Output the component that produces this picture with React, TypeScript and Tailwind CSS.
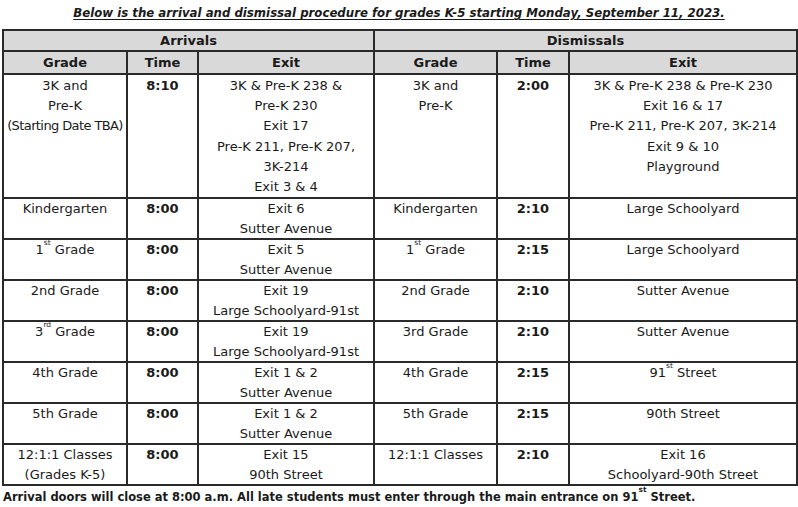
const font = { fontFamily: '"DejaVu Sans", "Open Sans", sans-serif' }

type Row = {
  grade: React.ReactNode
  time: string
  exit: React.ReactNode
  dGrade: React.ReactNode
  dTime: string
  dExit: React.ReactNode
  h: string
}

const Sup = ({ children }: { children: React.ReactNode }) => (
  <sup className="text-[7.5px] align-[5px] leading-none">{children}</sup>
)

const lines = (...items: React.ReactNode[]) =>
  items.map((item, i) => <div key={i}>{item}</div>)

const rows: Row[] = [
  {
    grade: [
      <div key="a">3K and</div>,
      <div key="b">Pre-K</div>,
      <div key="c" className="whitespace-nowrap tracking-[-0.6px] -mx-[3px]">(Starting Date TBA)</div>,
    ],
    time: '8:10',
    exit: lines('3K & Pre-K 238 &', 'Pre-K 230', 'Exit 17', 'Pre-K 211, Pre-K 207,', '3K-214', 'Exit 3 & 4'),
    dGrade: lines('3K and', 'Pre-K'),
    dTime: '2:00',
    dExit: lines('3K & Pre-K 238 &  Pre-K 230', 'Exit 16 & 17', 'Pre-K 211, Pre-K 207, 3K-214', 'Exit 9 & 10', 'Playground'),
    h: 'h-[123px]',
  },
  {
    grade: 'Kindergarten',
    time: '8:00',
    exit: lines('Exit 6', 'Sutter Avenue'),
    dGrade: 'Kindergarten',
    dTime: '2:10',
    dExit: 'Large Schoolyard',
    h: 'h-[41px]',
  },
  {
    grade: <>1<Sup>st</Sup> Grade</>,
    time: '8:00',
    exit: lines('Exit 5', 'Sutter Avenue'),
    dGrade: <>1<Sup>st</Sup> Grade</>,
    dTime: '2:15',
    dExit: 'Large Schoolyard',
    h: 'h-[41px]',
  },
  {
    grade: '2nd Grade',
    time: '8:00',
    exit: lines('Exit 19', 'Large Schoolyard-91st'),
    dGrade: '2nd Grade',
    dTime: '2:10',
    dExit: 'Sutter Avenue',
    h: 'h-[41px]',
  },
  {
    grade: <>3<Sup>rd</Sup> Grade</>,
    time: '8:00',
    exit: lines('Exit 19', 'Large Schoolyard-91st'),
    dGrade: '3rd Grade',
    dTime: '2:10',
    dExit: 'Sutter Avenue',
    h: 'h-[41px]',
  },
  {
    grade: '4th Grade',
    time: '8:00',
    exit: lines('Exit 1 & 2', 'Sutter Avenue'),
    dGrade: '4th Grade',
    dTime: '2:15',
    dExit: <>91<Sup>st</Sup> Street</>,
    h: 'h-[40px]',
  },
  {
    grade: '5th Grade',
    time: '8:00',
    exit: lines('Exit 1 & 2', 'Sutter Avenue'),
    dGrade: '5th Grade',
    dTime: '2:15',
    dExit: '90th Street',
    h: 'h-[41px]',
  },
  {
    grade: lines('12:1:1 Classes', '(Grades K-5)'),
    time: '8:00',
    exit: lines('Exit 15', '90th Street'),
    dGrade: '12:1:1 Classes',
    dTime: '2:10',
    dExit: lines('Exit 16', 'Schoolyard-90th Street'),
    h: 'h-[41px]',
  },
]

const cell = 'border-2 border-[#2a2a2a] align-top text-center p-0'

export default function App() {
  return (
    <div className="w-[798px] h-[507px] bg-white text-[#1a1a1a] overflow-hidden" style={font}>
      <div className="h-[29px] text-center">
        <span className="text-[11.75px] leading-[16px] font-bold italic underline underline-offset-2">
          Below is the arrival and dismissal procedure for grades K-5 starting Monday, September 11, 2023.
        </span>
      </div>
      <table className="ml-[2px] w-[794px] border-collapse table-fixed text-[13px] leading-[19.5px]">
        <colgroup>
          <col className="w-[124px]" />
          <col className="w-[71px]" />
          <col className="w-[176px]" />
          <col className="w-[123px]" />
          <col className="w-[72px]" />
          <col className="w-[228px]" />
        </colgroup>
        <thead>
          <tr className="h-[21px] bg-[#d9d9d9] font-bold">
            <th colSpan={3} className="border-2 border-[#2a2a2a] p-0 text-center align-middle leading-[17px]">Arrivals</th>
            <th colSpan={3} className="border-2 border-[#2a2a2a] p-0 text-center align-middle leading-[17px]">Dismissals</th>
          </tr>
          <tr className="h-[23px] bg-[#d9d9d9] font-bold text-[13px]">
            {['Grade', 'Time', 'Exit', 'Grade', 'Time', 'Exit'].map((t, i) => (
              <th key={i} className="border-2 border-[#2a2a2a] p-0 text-center align-middle leading-[19px]">{t}</th>
            ))}
          </tr>
        </thead>
        <tbody>
          {rows.map((r, i) => {
            const first = i === 0 ? 'pt-[1px] leading-[20.2px]' : ''
            return (
              <tr key={i} className={r.h}>
                <td className={`${cell} ${first}`}>{r.grade}</td>
                <td className={`${cell} font-bold ${first}`}>{r.time}</td>
                <td className={`${cell} ${first}`}>{r.exit}</td>
                <td className={`${cell} ${first}`}>{r.dGrade}</td>
                <td className={`${cell} font-bold ${first}`}>{r.dTime}</td>
                <td className={`${cell} ${first}`}>{r.dExit}</td>
              </tr>
            )
          })}
        </tbody>
      </table>
      <div className="pl-[3px] pt-[2px] text-[11.5px] leading-[18px] font-bold">
        Arrival doors will close at 8:00 a.m. All late students must enter through the main entrance on 91<Sup>st</Sup> Street.
      </div>
    </div>
  )
}
